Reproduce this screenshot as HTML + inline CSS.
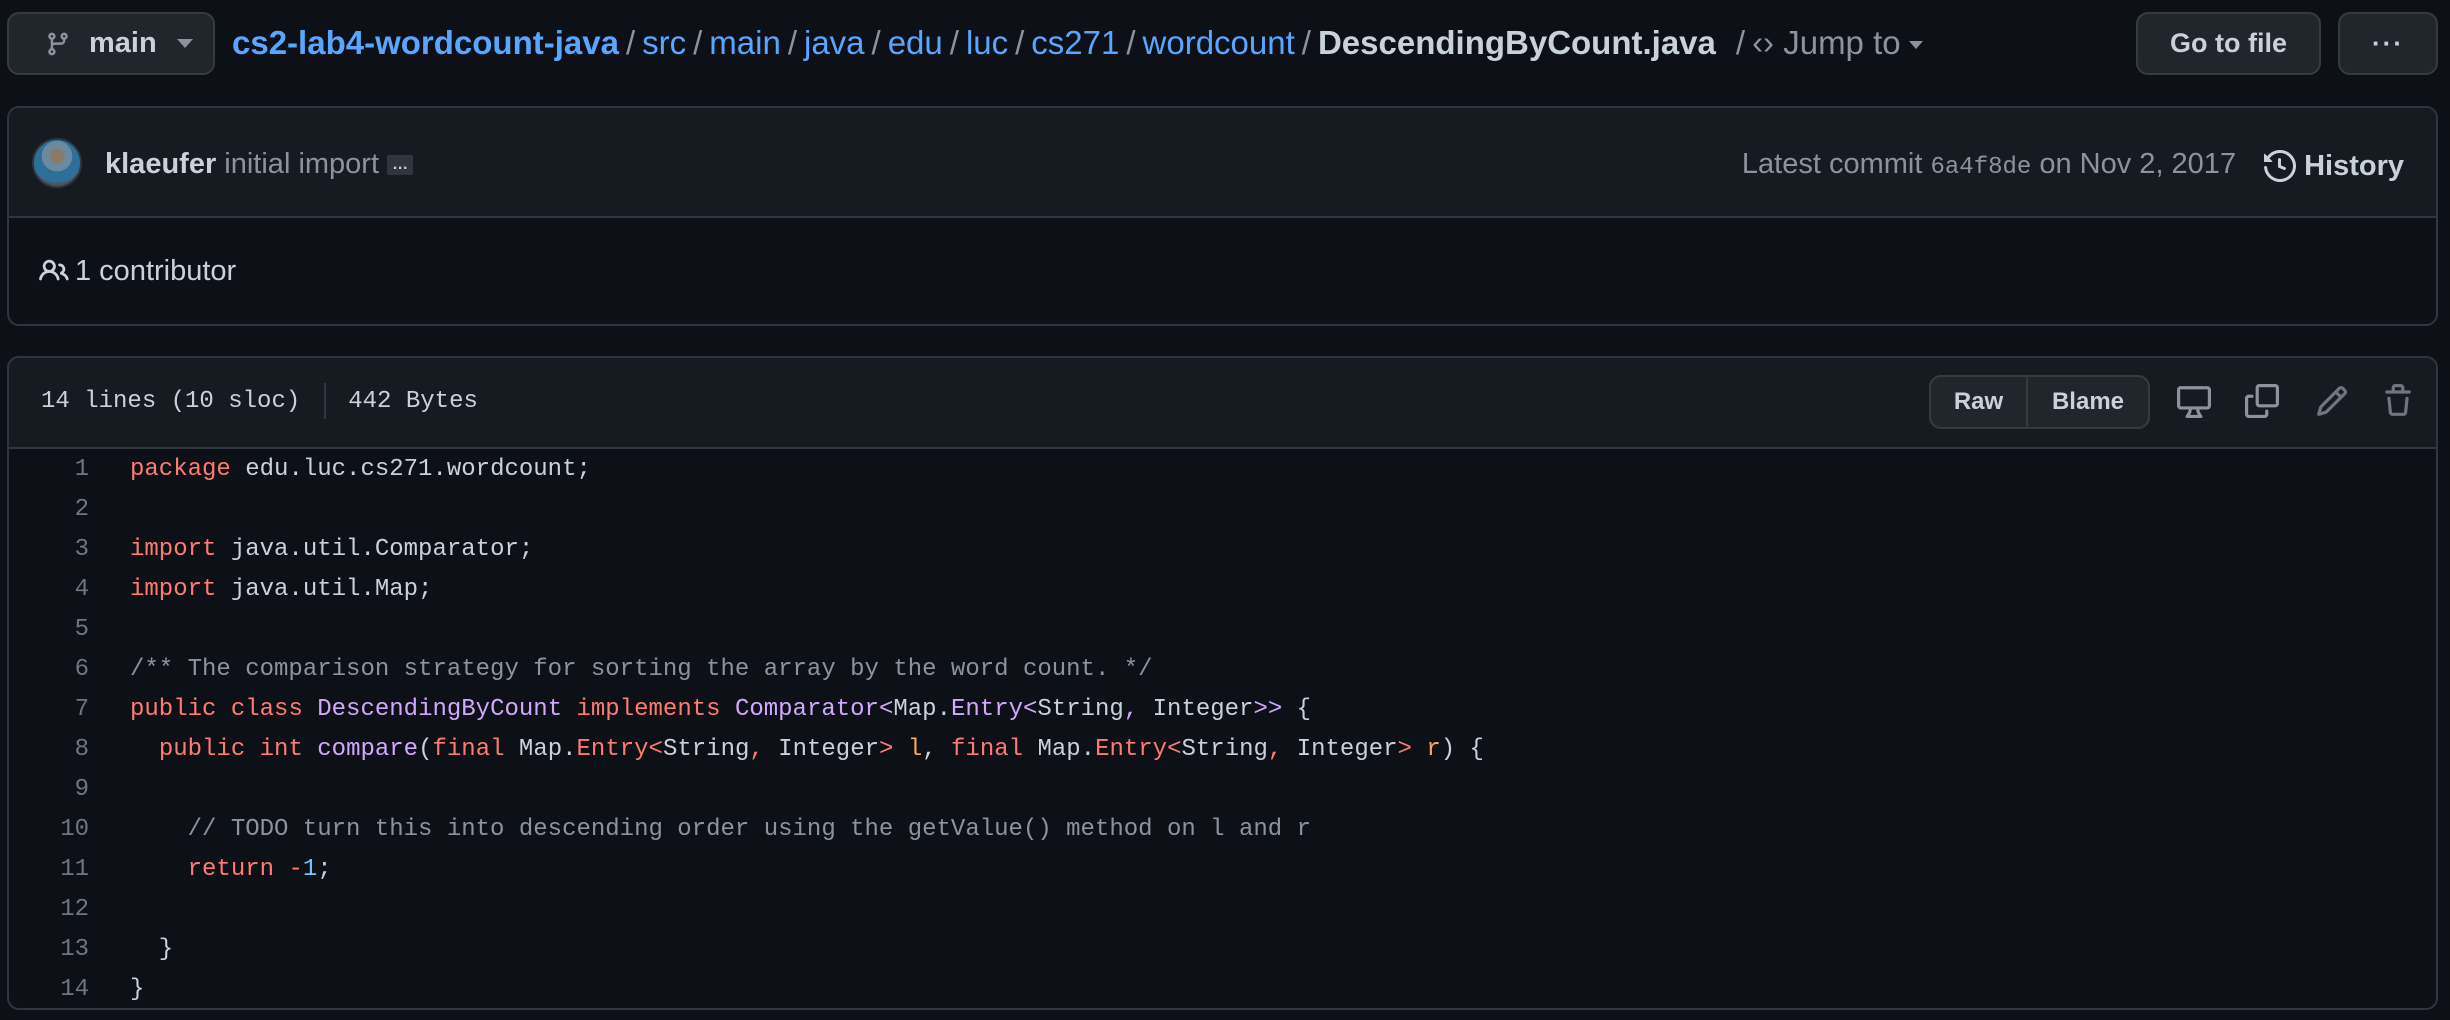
<!DOCTYPE html>
<html><head><meta charset="utf-8"><style>
*{box-sizing:border-box;margin:0;padding:0}
body{width:2450px;height:1020px;background:#0d1117;color:#c9d1d9;font-family:"Liberation Sans",sans-serif;font-size:29px;position:relative;overflow:hidden}
.abs{position:absolute}
.btn{position:absolute;background:#21262d;border:2px solid #363b42;border-radius:12px;color:#c9d1d9;font-weight:bold;display:flex;align-items:center;justify-content:center}
.crumb{position:absolute;left:232px;top:21px;font-size:33px;line-height:44px;color:#8b949e;white-space:nowrap}
.crumb a{color:#58a6ff;text-decoration:none}
.crumb .s{margin:0 7px}
.box{position:absolute;left:7px;width:2431px;border:2px solid #30363d;border-radius:12px;overflow:hidden}
.mono{font-family:"Liberation Mono",monospace}
.code{font-family:"Liberation Mono",monospace;font-size:24px;line-height:40px;white-space:pre}
.k{color:#ff7b72}.e{color:#d2a8ff}.c{color:#8b949e}.n{color:#79c0ff}.v{color:#ffa657}
.ln{position:absolute;left:0;width:80px;text-align:right;color:#6e7681}
</style></head><body>
<div class="btn" style="left:7px;top:12px;width:208px;height:63px;justify-content:flex-start;padding-left:36px">
<svg width="26" height="28" viewBox="0 0 16 16" style="margin-right:18px"><path fill="#8b949e" d="M9.5 3.250a2.25 2.25 0 1 1 3 2.122V6A2.5 2.5 0 0 1 10 8.5H6a1 1 0 0 0-1 1v1.128a2.251 2.251 0 1 1-1.5 0V5.372a2.25 2.25 0 1 1 1.5 0v1.836A2.5 2.5 0 0 1 6 7h4a1 1 0 0 0 1-1v-.628A2.25 2.25 0 0 1 9.5 3.25Zm-6 0a.75.75 0 1 0 1.5 0 .75.75 0 0 0-1.5 0Zm8.25-.75a.75.75 0 1 0 0 1.5.75.75 0 0 0 0-1.5ZM4.25 12a.75.75 0 1 0 0 1.5.75.75 0 0 0 0-1.5Z"/></svg>
<span>main</span><span style="margin-left:20px;width:0;height:0;border-left:8px solid transparent;border-right:8px solid transparent;border-top:9px solid #8b949e"></span></div>
<div class="crumb"><a style="font-weight:bold">cs2-lab4-wordcount-java</a><span class="s">/</span><a>src</a><span class="s">/</span><a>main</a><span class="s">/</span><a>java</a><span class="s">/</span><a>edu</a><span class="s">/</span><a>luc</a><span class="s">/</span><a>cs271</a><span class="s">/</span><a>wordcount</a><span class="s">/</span><b style="color:#c9d1d9">DescendingByCount.java</b><span class="s" style="margin-left:20px">/</span><span>‹› Jump to</span><span style="display:inline-block;margin-left:8px;vertical-align:middle;width:0;height:0;border-left:7px solid transparent;border-right:7px solid transparent;border-top:8px solid #8b949e"></span></div>
<div class="btn" style="left:2136px;top:12px;width:185px;height:63px;font-size:27px">Go to file</div>
<div class="btn" style="left:2338px;top:12px;width:100px;height:63px;font-size:26px;letter-spacing:2px">···</div>

<div class="box" style="top:106px;height:220px">
<div class="abs" style="left:0;top:0;width:100%;height:110px;background:#161b22;border-bottom:2px solid #30363d"></div>
<div class="abs" style="left:23px;top:30px;width:50px;height:50px;border-radius:50%;background:radial-gradient(circle at 50% 35%,#8a7a6a 0 20%,#6a8aa0 21% 40%,#2e6f9a 41% 70%,#4a5560 71%);border:2px solid #30363d"></div>
<div class="abs" style="left:96px;top:38px;line-height:36px"><b>klaeufer</b> <span style="color:#8b949e">initial import</span> <span style="display:inline-block;background:#30363d;color:#c9d1d9;font-size:16px;line-height:20px;padding:0 5px;vertical-align:middle;border-radius:2px;font-weight:bold">…</span></div>
<div class="abs" style="right:32px;top:38px;line-height:36px;display:flex;align-items:center"><span style="color:#8b949e">Latest commit <span class="mono" style="font-size:24px">6a4f8de</span> on Nov 2, 2017</span>
<svg width="32" height="32" viewBox="0 0 16 16" style="margin:0 8px 0 28px"><path fill="#c9d1d9" d="m.427 1.927 1.215 1.215a8.002 8.002 0 1 1-1.6 5.685.75.75 0 1 1 1.493-.154 6.5 6.5 0 1 0 1.18-4.458l1.358 1.358A.25.25 0 0 1 3.896 6H.25A.25.25 0 0 1 0 5.750V2.104a.25.25 0 0 1 .427-.177ZM7.75 4a.75.75 0 0 1 .75.75v2.992l2.028.812a.75.75 0 0 1-.557 1.392l-2.5-1A.751.751 0 0 1 7 8.25v-3.5A.75.75 0 0 1 7.75 4Z"/></svg><b>History</b></div>
<div class="abs" style="left:30px;top:145px;line-height:36px;display:flex;align-items:center"><svg width="30" height="30" viewBox="0 0 16 16" style="margin-right:6px"><path fill="#c9d1d9" d="M2 5.5a3.5 3.5 0 1 1 5.898 2.549 5.508 5.508 0 0 1 3.034 4.084.75.75 0 1 1-1.482.235 4 4 0 0 0-7.9 0 .75.75 0 0 1-1.482-.236A5.507 5.507 0 0 1 3.102 8.05 3.493 3.493 0 0 1 2 5.5ZM11 4a3.001 3.001 0 0 1 2.22 5.018 5.01 5.01 0 0 1 2.56 3.012.749.749 0 0 1-.885.954.752.752 0 0 1-.549-.514 3.507 3.507 0 0 0-2.522-2.372.75.75 0 0 1-.574-.73v-.352a.75.75 0 0 1 .416-.672A1.5 1.5 0 0 0 11 5.5.75.75 0 0 1 11 4Zm-5.5-.5a2 2 0 1 0-.001 3.999A2 2 0 0 0 5.5 3.5Z"/></svg>1 contributor</div>
</div>

<div class="box" style="top:356px;height:654px">
<div class="abs" style="left:0;top:0;width:100%;height:91px;background:#161b22;border-bottom:2px solid #30363d"></div>
<div class="abs code" style="left:32px;top:24px;color:#c9d1d9">14 lines (10 sloc)<span style="display:inline-block;width:2px;height:36px;background:#30363d;vertical-align:middle;margin:0 22px 0 24px"></span>442 Bytes</div>
<div class="abs" style="left:1920px;top:17px;width:221px;height:54px;border:2px solid #363b42;border-radius:12px;background:#21262d;display:flex;font-weight:bold;font-size:24px">
<div style="width:97px;display:flex;align-items:center;justify-content:center;border-right:2px solid #363b42">Raw</div><div style="flex:1;display:flex;align-items:center;justify-content:center">Blame</div></div>
<svg class="abs" style="left:2168px;top:26px" width="34" height="34" viewBox="0 0 16 16"><path fill="#8b949e" d="M14.25 1c.966 0 1.75.784 1.75 1.75v7.5A1.75 1.75 0 0 1 14.25 12h-3.727c.099 1.041.52 1.872 1.292 2.757A.752.752 0 0 1 11.25 16h-6.5a.75.75 0 0 1-.565-1.243c.772-.885 1.192-1.716 1.292-2.757H1.75A1.75 1.75 0 0 1 0 10.25v-7.5C0 1.784.784 1 1.75 1ZM1.75 2.5a.25.25 0 0 0-.25.25v7.5c0 .138.112.25.25.25h12.5a.25.25 0 0 0 .25-.25v-7.5a.25.25 0 0 0-.25-.25ZM9.018 12H6.982a5.72 5.72 0 0 1-.765 2.5h3.566a5.72 5.72 0 0 1-.765-2.5Z"/></svg>
<svg class="abs" style="left:2236px;top:26px" width="34" height="34" viewBox="0 0 16 16"><path fill="#8b949e" d="M0 6.75C0 5.784.784 5 1.75 5h1.5a.75.75 0 0 1 0 1.5h-1.5a.25.25 0 0 0-.25.25v7.5c0 .138.112.25.25.25h7.5a.25.25 0 0 0 .25-.25v-1.5a.75.75 0 0 1 1.5 0v1.5A1.75 1.75 0 0 1 9.25 16h-7.5A1.75 1.75 0 0 1 0 14.25Z M5 1.75C5 .784 5.784 0 6.75 0h7.5C15.216 0 16 .784 16 1.75v7.5A1.75 1.75 0 0 1 14.25 11h-7.5A1.75 1.75 0 0 1 5 9.25Zm1.75-.25a.25.25 0 0 0-.25.25v7.5c0 .138.112.25.25.25h7.5a.25.25 0 0 0 .25-.25v-7.5a.25.25 0 0 0-.25-.25Z"/></svg>
<svg class="abs" style="left:2306px;top:26px" width="34" height="34" viewBox="0 0 16 16"><path fill="#6e7681" d="M11.013 1.427a1.75 1.75 0 0 1 2.474 0l1.086 1.086a1.75 1.75 0 0 1 0 2.474l-8.61 8.61c-.21.21-.47.364-.756.445l-3.251.93a.75.75 0 0 1-.927-.928l.929-3.25c.081-.286.235-.547.445-.758l8.61-8.61Zm.176 4.823L9.75 4.81l-6.286 6.287a.253.253 0 0 0-.064.108l-.558 1.953 1.953-.558a.253.253 0 0 0 .108-.064Zm1.238-3.763a.25.25 0 0 0-.354 0L10.811 3.75l1.439 1.44 1.263-1.263a.25.25 0 0 0 0-.354Z"/></svg>
<svg class="abs" style="left:2372px;top:26px" width="34" height="34" viewBox="0 0 16 16"><path fill="#6e7681" d="M11 1.75V3h2.25a.75.75 0 0 1 0 1.5H2.75a.75.75 0 0 1 0-1.5H5V1.75C5 .784 5.784 0 6.75 0h2.5C10.216 0 11 .784 11 1.75ZM4.496 6.675l.66 6.6a.25.25 0 0 0 .249.225h5.19a.25.25 0 0 0 .249-.225l.66-6.6a.75.75 0 0 1 1.492.149l-.66 6.6A1.748 1.748 0 0 1 10.595 15h-5.19a1.75 1.75 0 0 1-1.741-1.575l-.66-6.6a.75.75 0 1 1 1.492-.15ZM6.5 1.75V3h3V1.75a.25.25 0 0 0-.25-.25h-2.5a.25.25 0 0 0-.25.25Z"/></svg>

<div class="abs code" style="left:0;top:92px;width:100%">
<div class="ln" style="top:0">1</div><div class="ln" style="top:40px">2</div><div class="ln" style="top:80px">3</div><div class="ln" style="top:120px">4</div><div class="ln" style="top:160px">5</div><div class="ln" style="top:200px">6</div><div class="ln" style="top:240px">7</div><div class="ln" style="top:280px">8</div><div class="ln" style="top:320px">9</div><div class="ln" style="top:360px">10</div><div class="ln" style="top:400px">11</div><div class="ln" style="top:440px">12</div><div class="ln" style="top:480px">13</div><div class="ln" style="top:520px">14</div>
<div class="abs" style="left:121px;top:0"><span class="k">package</span> edu.luc.cs271.wordcount;

<span class="k">import</span> java.util.Comparator;
<span class="k">import</span> java.util.Map;

<span class="c">/** The comparison strategy for sorting the array by the word count. */</span>
<span class="k">public</span> <span class="k">class</span> <span class="e">DescendingByCount</span> <span class="k">implements</span> <span class="e">Comparator&lt;</span>Map.<span class="e">Entry&lt;</span>String<span class="e">,</span> Integer<span class="e">&gt;&gt;</span> {
  <span class="k">public</span> <span class="k">int</span> <span class="e">compare</span>(<span class="k">final</span> Map.<span class="k">Entry&lt;</span>String<span class="k">,</span> Integer<span class="k">&gt;</span> <span class="v">l</span>, <span class="k">final</span> Map.<span class="k">Entry&lt;</span>String<span class="k">,</span> Integer<span class="k">&gt;</span> <span class="v">r</span>) {

    <span class="c">// TODO turn this into descending order using the getValue() method on l and r</span>
    <span class="k">return</span> <span class="k">-</span><span class="n">1</span>;

  }
}</div></div>
</div>
</body></html>
